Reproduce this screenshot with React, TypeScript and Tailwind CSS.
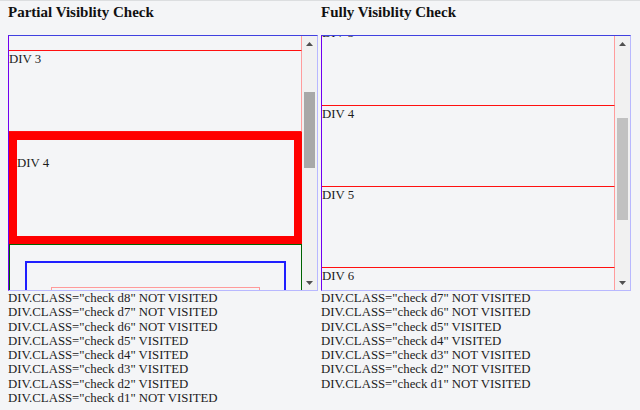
import React from "react";

const serif = { fontFamily: '"Liberation Serif", "Times New Roman", serif' };

const leftResults = [
  'DIV.CLASS="check d8" NOT VISITED',
  'DIV.CLASS="check d7" NOT VISITED',
  'DIV.CLASS="check d6" NOT VISITED',
  'DIV.CLASS="check d5" VISITED',
  'DIV.CLASS="check d4" VISITED',
  'DIV.CLASS="check d3" VISITED',
  'DIV.CLASS="check d2" VISITED',
  'DIV.CLASS="check d1" NOT VISITED',
];

const rightResults = [
  'DIV.CLASS="check d7" NOT VISITED',
  'DIV.CLASS="check d6" NOT VISITED',
  'DIV.CLASS="check d5" VISITED',
  'DIV.CLASS="check d4" VISITED',
  'DIV.CLASS="check d3" NOT VISITED',
  'DIV.CLASS="check d2" NOT VISITED',
  'DIV.CLASS="check d1" NOT VISITED',
];

function Box({ label }: { label: string }) {
  return (
    <div className="h-[81px] border-b border-b-[#ff1010] border-r border-r-[#ff9c9c]">
      <div className="pt-[1px]">{label}</div>
    </div>
  );
}

function Scrollbar({ top, height, color }: { top: number; height: number; color: string }) {
  return (
    <div className="w-[15px] bg-[#f1f1f1] flex flex-col">
      <div className="h-[15px] flex items-center justify-center">
        <svg width="7" height="4" viewBox="0 0 7 4">
          <polygon points="3.5,0 7,4 0,4" fill="#505050" />
        </svg>
      </div>
      <div className="flex-1 flex flex-col px-[2px]">
        <div style={{ height: top }} />
        <div style={{ height, backgroundColor: color }} />
      </div>
      <div className="h-[15px] flex items-center justify-center">
        <svg width="7" height="4" viewBox="0 0 7 4">
          <polygon points="0,0 7,0 3.5,4" fill="#505050" />
        </svg>
      </div>
    </div>
  );
}

function Panel({ children, thumbTop, thumbHeight, thumbColor }: {
  children: React.ReactNode; thumbTop: number; thumbHeight: number; thumbColor: string;
}) {
  return (
    <div className="h-[256px] flex border border-t-[#4040e0] border-l-[#7000f0] border-r-[#b8b8ff] border-b-[#b8b8ff]">
      <div className="flex-1 overflow-hidden">{children}</div>
      <Scrollbar top={thumbTop} height={thumbHeight} color={thumbColor} />
    </div>
  );
}

function Results({ lines }: { lines: string[] }) {
  return (
    <div className="text-[12.8px] leading-[14.3px] text-[#1c1c1c]">
      {lines.map((l) => (
        <div key={l}>{l}</div>
      ))}
    </div>
  );
}

export default function App() {
  return (
    <div
      className="w-[640px] h-[410px] bg-[#f4f5f7] border-t border-t-[#dcdee0] overflow-hidden text-[#1c1c1c]"
      style={serif}
    >
      <div className="flex gap-[3px] px-[8px]">
        {/* partial */}
        <div className="w-[310px] flex flex-col">
          <h2 className="h-[34px] pt-[2px] text-[15px] leading-[18px] font-bold text-[#111]">
            Partial Visiblity Check
          </h2>
          <Panel thumbTop={41} thumbHeight={76} thumbColor="#a8a8a8">
            <div className="mt-[-147px] text-[12.8px] leading-[14.3px]">
              <Box label="DIV 1" />
              <Box label="DIV 2" />
              <Box label="DIV 3" />
              <div className="h-[112px] border-[8px] border-[#ff0000] pt-[16px]">DIV 4</div>
              <div className="h-[200px] border border-[#006400] pt-[16px] px-[15px]">
                <div className="h-[160px] border-2 border-[#1f1fff] p-[24px]">
                  <div className="h-[100px] border border-[#ff9a9a]" />
                </div>
              </div>
            </div>
          </Panel>
          <Results lines={leftResults} />
        </div>

        {/* fully */}
        <div className="w-[310px] flex flex-col">
          <h2 className="h-[34px] pt-[2px] text-[15px] leading-[18px] font-bold text-[#111]">
            Fully Visiblity Check
          </h2>
          <Panel thumbTop={67} thumbHeight={102} thumbColor="#c1c1c1">
            <div className="mt-[-173px] text-[12.8px] leading-[14.3px]">
              <Box label="DIV 1" />
              <Box label="DIV 2" />
              <Box label="DIV 3" />
              <Box label="DIV 4" />
              <Box label="DIV 5" />
              <Box label="DIV 6" />
              <Box label="DIV 7" />
            </div>
          </Panel>
          <Results lines={rightResults} />
        </div>
      </div>
    </div>
  );
}
